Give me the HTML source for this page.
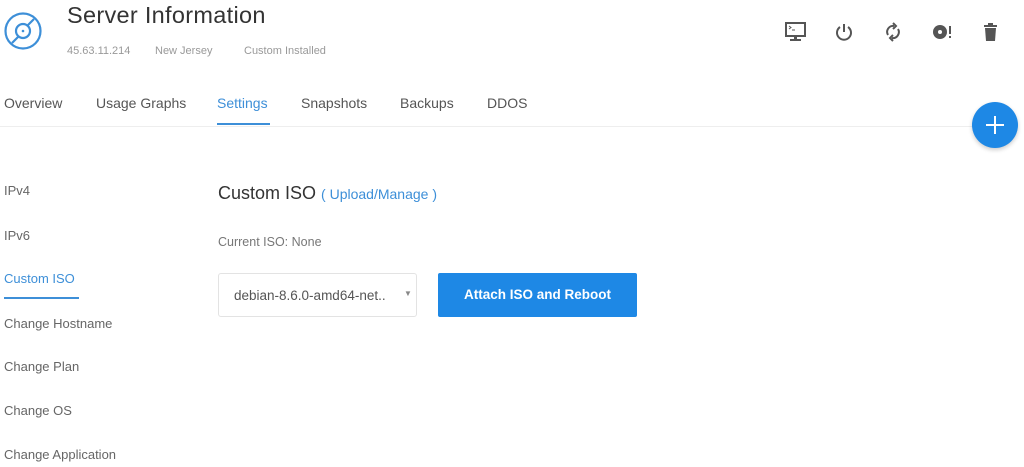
<!DOCTYPE html>
<html><head><meta charset="utf-8"><style>
*{margin:0;padding:0;box-sizing:border-box}
body{width:1024px;height:467px;overflow:hidden;background:#fff;font-family:"Liberation Sans",sans-serif;position:relative;color:#555}
.a{position:absolute;white-space:nowrap}
.tab{position:absolute;top:95px;font-size:14px;color:#555}
.side{position:absolute;left:4px;font-size:13px;color:#666}
.ic{position:absolute;top:22px}
</style></head><body>
<svg class="a" style="left:4px;top:12px" width="38" height="38" viewBox="0 0 38 38" fill="none" stroke="#3d8fd8" stroke-width="2.2">
<circle cx="19" cy="19" r="17.5"/><circle cx="19" cy="19" r="7"/><circle cx="19" cy="19" r="1.3" fill="#3d8fd8" stroke="none"/>
<path d="M24 13 L30 7 M14 25 L8 31"/></svg>
<div class="a" style="left:67px;top:2px;font-size:23.5px;color:#333;letter-spacing:0.3px">Server Information</div>
<div class="a" style="left:67px;top:45px;font-size:11px;color:#999">45.63.11.214</div>
<div class="a" style="left:155px;top:45px;font-size:11px;color:#999">New Jersey</div>
<div class="a" style="left:244px;top:45px;font-size:11px;color:#999">Custom Installed</div>

<svg class="ic" style="left:785px" width="21" height="20" viewBox="0 0 21 20"><rect x="1" y="1" width="19" height="13" fill="none" stroke="#555" stroke-width="2"/><path d="M4 4l2 1.5-2 1.5M7 8h3" stroke="#555" fill="none"/><rect x="9" y="14" width="3" height="3" fill="#555"/><rect x="5" y="17" width="11" height="2" fill="#555"/></svg>
<svg class="ic" style="left:835px" width="18" height="20" viewBox="0 0 18 20" fill="none" stroke="#555" stroke-width="2"><path d="M5 5A7 7 0 1 0 13 5M9 2v8"/></svg>
<svg class="ic" style="left:884px" width="18" height="20" viewBox="0 0 18 20" fill="none" stroke="#555" stroke-width="2"><path d="M4 13A6 6 0 0 1 10 4M14 7A6 6 0 0 1 8 16"/><path d="M9 1l3 3-3 3M9 19l-3-3 3-3" /></svg>
<svg class="ic" style="left:932px" width="22" height="20" viewBox="0 0 22 20"><circle cx="8" cy="10" r="7" fill="#555"/><circle cx="8" cy="10" r="2" fill="#fff"/><rect x="17" y="4" width="2" height="8" fill="#555"/><rect x="17" y="14" width="2" height="2" fill="#555"/></svg>
<svg class="ic" style="left:983px" width="15" height="20" viewBox="0 0 15 20"><rect x="1" y="3" width="13" height="2" fill="#555"/><rect x="5" y="1" width="5" height="2" fill="#555"/><path d="M2 6h11l-1 13H3z" fill="#555"/></svg>

<div class="tab" style="left:4px">Overview</div>
<div class="tab" style="left:96px">Usage Graphs</div>
<div class="tab" style="left:217px;color:#3d8fd8">Settings</div>
<div class="a" style="left:217px;top:123px;width:53px;height:2px;background:#3d8fd8"></div>
<div class="tab" style="left:301px">Snapshots</div>
<div class="tab" style="left:400px">Backups</div>
<div class="tab" style="left:487px">DDOS</div>
<div class="a" style="left:0;top:126px;width:975px;height:1px;background:#eee"></div>
<div class="a" style="left:972px;top:102px;width:46px;height:46px;border-radius:50%;background:#1e88e5;box-shadow:0 2px 4px rgba(0,0,0,.2)"></div>
<div class="a" style="left:986px;top:124px;width:18px;height:2px;background:#fff"></div>
<div class="a" style="left:994px;top:116px;width:2px;height:18px;background:#fff"></div>

<div class="side" style="top:183px">IPv4</div>
<div class="side" style="top:228px">IPv6</div>
<div class="side" style="top:271px;color:#3d8fd8">Custom ISO</div>
<div class="a" style="left:4px;top:297px;width:75px;height:2px;background:#3d8fd8"></div>
<div class="side" style="top:316px">Change Hostname</div>
<div class="side" style="top:359px">Change Plan</div>
<div class="side" style="top:403px">Change OS</div>
<div class="side" style="top:447px">Change Application</div>

<div class="a" style="left:218px;top:183px;font-size:18px;color:#333">Custom ISO <span style="font-size:14px;color:#3d8fd8">( Upload/Manage )</span></div>
<div class="a" style="left:218px;top:235px;font-size:12.5px;color:#777">Current ISO: None</div>
<div class="a" style="left:218px;top:273px;width:199px;height:44px;border:1px solid #e3e3e3;border-radius:3px;font-size:13.5px;color:#555;padding:14px 0 0 15px">debian-8.6.0-amd64-net..<span style="position:absolute;left:185px;top:15px;font-size:8px;color:#888">▼</span></div>
<div class="a" style="left:438px;top:273px;width:199px;height:44px;background:#1e88e5;border-radius:2px;color:#fff;font-size:13.5px;font-weight:bold;text-align:center;line-height:44px">Attach ISO and Reboot</div>
</body></html>
